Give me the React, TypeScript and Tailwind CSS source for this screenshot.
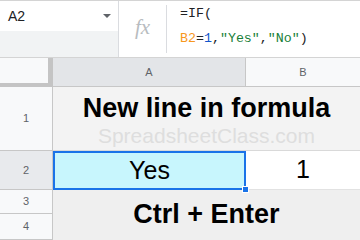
import React from 'react';

const HeaderCell: React.FC<{ label: string; selected?: boolean; last?: boolean }> = ({ label, selected, last }) => (
    <div
        className={`flex items-center justify-center border-b border-[#c7c7c7] text-[11px] text-[#5f6368] ${last ? '' : 'border-r'} ${selected ? 'bg-[#e3e5e8]' : 'bg-[#f8f9fa]'}`}
    >
        {label}
    </div>
);

const RowHead: React.FC<{ n: number; selected?: boolean; className?: string }> = ({ n, selected, className = '' }) => (
    <div
        className={`flex items-center justify-center border-r border-b border-[#c7c7c7] text-[11px] text-[#5f6368] ${selected ? 'bg-[#e8eaed]' : 'bg-[#f8f9fa]'} ${className}`}
    >
        {n}
    </div>
);

export default function App() {
    return (
        <div className="w-[360px] h-[240px] overflow-hidden bg-white font-['Liberation_Sans',Arial,sans-serif]">
            {/* formula bar */}
            <div className="flex h-[58px] border-t border-b border-[#d4d4d4]">
                <div className="w-[118px] flex flex-col">
                    <div className="h-[30px] bg-white flex items-center justify-between pl-[8px] pr-[7px]">
                        <span className="text-[14px] text-[#202124]">A2</span>
                        <span className="w-0 h-0 border-l-[4px] border-r-[4px] border-t-[4px] border-l-transparent border-r-transparent border-t-[#5f6368]"></span>
                    </div>
                    <div className="flex-1 bg-[#f1f3f4]"></div>
                </div>
                <div className="w-px bg-[#dadce0]"></div>
                <div className="w-[47px] flex items-center justify-center">
                    <span className="font-['Liberation_Serif',serif] italic text-[21px] text-[#b8bcc0] pb-[2px]">fx</span>
                </div>
                <div className="w-px bg-[#dadce0] my-[4px]"></div>
                <div className="pl-[13px] font-['Liberation_Mono',monospace] text-[13.3px] leading-[25px] text-[#202124]">
                    <div>=IF(</div>
                    <div>
                        <span className="text-[#f7981d]">B2</span>=<span className="text-[#1155cc]">1</span>,
                        <span className="text-[#188038]">"Yes"</span>,<span className="text-[#188038]">"No"</span>)
                    </div>
                </div>
            </div>

            {/* grid */}
            <div className="grid grid-cols-[53px_193px_1fr] grid-rows-[29px_64px_39px_24px_26px]">
                <div className="bg-[#f8f9fa] border-r-[5px] border-b-[4px] border-[#c4c4c4]"></div>
                <HeaderCell label="A" selected />
                <HeaderCell label="B" last />

                <RowHead n={1} />
                <div className="col-span-2 bg-[#f3f3f3] border-b border-[#d9d9d9] flex flex-col items-center pt-[6px]">
                    <span className="text-[27px] leading-[31px] font-bold text-black">New line in formula</span>
                    <span className="text-[21px] leading-[24px] text-[#dedede]">SpreadsheetClass.com</span>
                </div>

                <RowHead n={2} selected />
                <div className="relative bg-[#c8f6fd] border-2 border-[#1a73e8] flex items-center justify-center">
                    <span className="text-[25px] text-black">Yes</span>
                    <span className="absolute -right-[5px] -bottom-[5px] w-[7px] h-[7px] bg-[#1a73e8] border border-white"></span>
                </div>
                <div className="bg-white border-b border-[#e2e2e2] flex items-center justify-center">
                    <span className="text-[25px] text-black">1</span>
                </div>

                <RowHead n={3} />
                <div className="col-span-2 row-span-2 bg-[#efefef] flex items-center justify-center pb-[2px]">
                    <span className="text-[27px] font-bold text-black">Ctrl + Enter</span>
                </div>
                <RowHead n={4} />
            </div>
        </div>
    );
}
